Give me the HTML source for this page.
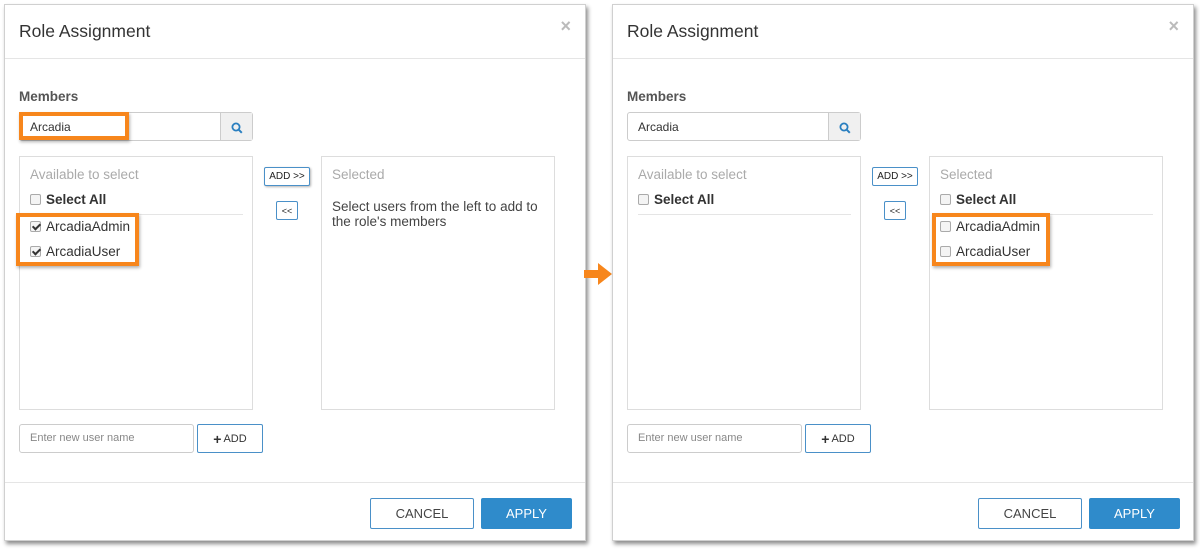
<!DOCTYPE html>
<html><head><meta charset="utf-8"><style>
*{box-sizing:border-box;margin:0;padding:0}
body{width:1200px;height:549px;background:#fff;position:relative;overflow:hidden;font-family:"Liberation Sans",sans-serif;color:#444}
.dlg{position:absolute;top:4px;width:582px;height:537px;background:#fff;border:1px solid #d0d0d0;box-shadow:2px 3px 4px rgba(0,0,0,.45)}
.a{position:absolute}
.title{left:14px;top:16px;font-size:17.5px;color:#333}
.x{right:14px;top:11px;font-size:18px;color:#bbb;font-weight:bold}
.hl{left:0;right:0;height:1px;background:#e5e5e5}
.lbl{left:14px;top:84px;font-size:13.5px;font-weight:bold;color:#555}
.inp{border:1px solid #ccc;border-radius:3px;background:#fff}
.box{border:1px solid #ddd;background:#fff}
.gray{color:#aaa;font-size:13.5px}
.cb{width:11px;height:11px;border:1px solid #aaa;border-radius:2px;background:#f4f4f4;display:inline-block;position:relative}
.cb.on::after{content:"";position:absolute;left:3px;top:0px;width:3px;height:6px;border:solid #333;border-width:0 2px 2px 0;transform:rotate(45deg)}
.row{font-size:13.5px;color:#333;display:flex;align-items:center;gap:5px}
.btnb{border:1px solid #4a90c8;border-radius:2px;background:#fff;font-size:10px;color:#222;display:flex;align-items:center;justify-content:center}
.or{border:4px solid #f7861c}
</style></head><body>

<!-- left dialog -->
<div class="dlg" style="left:4px">
 <div class="a title">Role Assignment</div>
 <div class="a x">×</div>
 <div class="a hl" style="top:53px"></div>
 <div class="a lbl">Members</div>
 <div class="a inp" style="left:14px;top:107px;width:234px;height:29px"></div>
 <div class="a" style="left:215px;top:108px;width:32px;height:27px;background:#f0f0f0;border-left:1px solid #ccc"></div>
 <svg class="a" style="left:226px;top:117px" width="12" height="12" viewBox="0 0 12 12"><circle cx="5" cy="5" r="3.6" fill="none" stroke="#2a7fc0" stroke-width="1.8"/><path d="M7.6 7.6L10.8 10.8" stroke="#2a7fc0" stroke-width="2"/></svg>
 <div class="a" style="left:25px;top:115px;font-size:12px;color:#333">Arcadia</div>
 <div class="a box" style="left:14px;top:151px;width:234px;height:254px"></div>
 <div class="a gray" style="left:25px;top:162px">Available to select</div>
 <div class="a row" style="left:25px;top:187px;font-weight:bold"><span class="cb"></span>Select All</div>
 <div class="a" style="left:25px;top:209px;width:213px;height:1px;background:#e5e5e5"></div>
 <div class="a row" style="left:25px;top:214px"><span class="cb on"></span>ArcadiaAdmin</div>
 <div class="a row" style="left:25px;top:239px"><span class="cb on"></span>ArcadiaUser</div>
 <div class="a btnb" style="left:259px;top:162px;width:46px;height:19px;box-shadow:1px 1px 2px rgba(0,0,0,.3)">ADD &gt;&gt;</div>
 <div class="a btnb" style="left:271px;top:196px;width:22px;height:19px;font-size:9px">&lt;&lt;</div>
 <div class="a box" style="left:316px;top:151px;width:234px;height:254px"></div>
 <div class="a gray" style="left:327px;top:162px">Selected</div>
 <div class="a" style="left:327px;top:194px;font-size:13.5px;color:#444;line-height:15px;width:215px">Select users from the left to add to the role's members</div>
 <div class="a inp" style="left:14px;top:419px;width:175px;height:29px"></div>
 <div class="a" style="left:25px;top:427px;font-size:11px;color:#888">Enter new user name</div>
 <div class="a btnb" style="left:192px;top:419px;width:66px;height:29px;font-size:11px;color:#333"><b style="font-size:14px;margin-right:2px">+</b>ADD</div>
 <div class="a hl" style="top:477px"></div>
 <div class="a btnb" style="left:365px;top:493px;width:104px;height:31px;font-size:13px;color:#444">CANCEL</div>
 <div class="a" style="left:476px;top:493px;width:91px;height:31px;background:#2f8bcb;border-radius:2px;color:#fff;font-size:13px;display:flex;align-items:center;justify-content:center">APPLY</div>
</div>
<div class="a or" style="left:19px;top:112px;width:110px;height:28px;box-shadow:1px 2px 3px rgba(0,0,0,.3)"></div>
<div class="a or" style="left:16px;top:213px;width:123px;height:53px;box-shadow:1px 2px 3px rgba(0,0,0,.3)"></div>

<!-- arrow -->
<svg class="a" style="left:584px;top:263px" width="30" height="22" viewBox="0 0 30 22"><path d="M0 7H14V0L28 11L14 22V15H0Z" fill="#f7861c"/></svg>

<!-- right dialog -->
<div class="dlg" style="left:612px">
 <div class="a title">Role Assignment</div>
 <div class="a x">×</div>
 <div class="a hl" style="top:53px"></div>
 <div class="a lbl">Members</div>
 <div class="a inp" style="left:14px;top:107px;width:234px;height:29px"></div>
 <div class="a" style="left:215px;top:108px;width:32px;height:27px;background:#f0f0f0;border-left:1px solid #ccc"></div>
 <svg class="a" style="left:226px;top:117px" width="12" height="12" viewBox="0 0 12 12"><circle cx="5" cy="5" r="3.6" fill="none" stroke="#2a7fc0" stroke-width="1.8"/><path d="M7.6 7.6L10.8 10.8" stroke="#2a7fc0" stroke-width="2"/></svg>
 <div class="a" style="left:25px;top:115px;font-size:12px;color:#333">Arcadia</div>
 <div class="a box" style="left:14px;top:151px;width:234px;height:254px"></div>
 <div class="a gray" style="left:25px;top:162px">Available to select</div>
 <div class="a row" style="left:25px;top:187px;font-weight:bold"><span class="cb"></span>Select All</div>
 <div class="a" style="left:25px;top:209px;width:213px;height:1px;background:#e5e5e5"></div>
 <div class="a btnb" style="left:259px;top:162px;width:46px;height:19px">ADD &gt;&gt;</div>
 <div class="a btnb" style="left:271px;top:196px;width:22px;height:19px;font-size:9px">&lt;&lt;</div>
 <div class="a box" style="left:316px;top:151px;width:234px;height:254px"></div>
 <div class="a gray" style="left:327px;top:162px">Selected</div>
 <div class="a row" style="left:327px;top:187px;font-weight:bold"><span class="cb"></span>Select All</div>
 <div class="a" style="left:327px;top:209px;width:213px;height:1px;background:#e5e5e5"></div>
 <div class="a row" style="left:327px;top:214px"><span class="cb"></span>ArcadiaAdmin</div>
 <div class="a row" style="left:327px;top:239px"><span class="cb"></span>ArcadiaUser</div>
 <div class="a inp" style="left:14px;top:419px;width:175px;height:29px"></div>
 <div class="a" style="left:25px;top:427px;font-size:11px;color:#888">Enter new user name</div>
 <div class="a btnb" style="left:192px;top:419px;width:66px;height:29px;font-size:11px;color:#333"><b style="font-size:14px;margin-right:2px">+</b>ADD</div>
 <div class="a hl" style="top:477px"></div>
 <div class="a btnb" style="left:365px;top:493px;width:104px;height:31px;font-size:13px;color:#444">CANCEL</div>
 <div class="a" style="left:476px;top:493px;width:91px;height:31px;background:#2f8bcb;border-radius:2px;color:#fff;font-size:13px;display:flex;align-items:center;justify-content:center">APPLY</div>
</div>
<div class="a or" style="left:932px;top:213px;width:118px;height:53px;box-shadow:1px 2px 3px rgba(0,0,0,.3)"></div>
</body></html>
